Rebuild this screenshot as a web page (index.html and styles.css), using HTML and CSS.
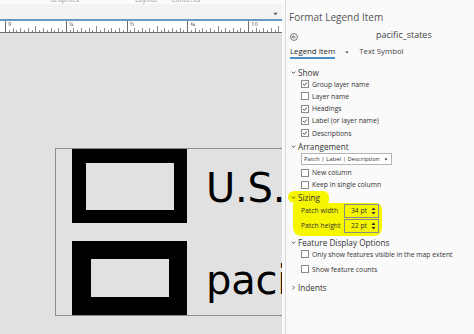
FILE: index.html
```html
<!DOCTYPE html>
<html>
<head>
  <title>Format Legend Item</title>
  <link rel="stylesheet" href="styles.css">
</head>
<body>
  <div class="app">
    <div class="layout-view">
      <div class="toolbar">
        <div class="toolbar-tabs">
          <span class="tb-graphics">Graphics</span>
          <span class="tb-layout">Layout</span>
          <span class="tb-contents">Contents</span>
        </div>
        <div class="toolbar-row">
          <svg class="toolbar-caret" viewBox="0 0 6 4"><path d="M0.5 0.5 3 3.5 5.5 0.5Z"/></svg>
        </div>
      </div>

      <div class="ruler">
        <div class="ruler-scale">
          <span class="ruler-seg">9</span>
          <span class="ruler-seg">¼</span>
          <span class="ruler-seg">½</span>
          <span class="ruler-seg">¾</span>
          <span class="ruler-seg">10</span>
        </div>
      </div>

      <div class="page">
        <div class="legend-frame">
          <div class="legend-row">
            <div class="patch patch-thin"></div>
            <span class="legend-label">U.S. States</span>
          </div>
          <div class="legend-row">
            <div class="patch patch-heavy"></div>
            <span class="legend-label">pacific_states</span>
          </div>
        </div>
      </div>
    </div>

    <aside class="pane">
      <div class="pane-title">Format Legend Item</div>

      <div class="pane-object">
        <svg class="back-icon" viewBox="0 0 10 10">
          <circle cx="5" cy="5" r="4.3"/>
          <path d="M7.2 5H2.9M4.8 3 2.8 5 4.8 7"/>
        </svg>
        <span class="object-name">pacific_states</span>
      </div>

      <div class="tabs">
        <span class="tab tab-active">Legend Item</span>
        <svg class="tab-caret" viewBox="0 0 6 4"><path d="M0.5 0.5 3 3.5 5.5 0.5Z"/></svg>
        <span class="tab">Text Symbol</span>
      </div>

      <section class="group">
        <div class="group-head">
          <svg class="chevron" viewBox="0 0 6 6"><path d="M1 2 3 4 5 2"/></svg>Show
        </div>
        <div class="check"><span class="box"><svg viewBox="0 0 8 8"><path d="M1.6 4.1 3.2 5.9 6.5 1.9"/></svg></span>Group layer name</div>
        <div class="check"><span class="box"></span>Layer name</div>
        <div class="check"><span class="box"><svg viewBox="0 0 8 8"><path d="M1.6 4.1 3.2 5.9 6.5 1.9"/></svg></span>Headings</div>
        <div class="check"><span class="box"><svg viewBox="0 0 8 8"><path d="M1.6 4.1 3.2 5.9 6.5 1.9"/></svg></span>Label (or layer name)</div>
        <div class="check"><span class="box"><svg viewBox="0 0 8 8"><path d="M1.6 4.1 3.2 5.9 6.5 1.9"/></svg></span>Descriptions</div>
      </section>

      <section class="group">
        <div class="group-head group-head-tight">
          <svg class="chevron" viewBox="0 0 6 6"><path d="M1 2 3 4 5 2"/></svg>Arrangement
        </div>
        <div class="select">
          <span>Patch | Label | Description</span>
          <svg class="select-caret" viewBox="0 0 6 4"><path d="M0.5 0.5 3 3.5 5.5 0.5Z"/></svg>
        </div>
        <div class="check check-first"><span class="box"></span>New column</div>
        <div class="check"><span class="box"></span>Keep in single column</div>
      </section>

      <section class="group">
        <div class="group-head group-head-flat">
          <span class="marker marker-head">
            <svg class="chevron" viewBox="0 0 6 6"><path d="M1 2 3 4 5 2"/></svg>Sizing
          </span>
        </div>
        <div class="marker size-fields">
          <div class="size-row">
            <span class="size-label">Patch width</span>
            <span class="spin">
              <span class="spin-value">34 pt</span>
              <svg class="spin-arrows" viewBox="0 0 5 10"><path d="M0.5 4 2.5 1.5 4.5 4ZM0.5 6 2.5 8.5 4.5 6Z"/></svg>
            </span>
          </div>
          <div class="size-row">
            <span class="size-label">Patch height</span>
            <span class="spin">
              <span class="spin-value">22 pt</span>
              <svg class="spin-arrows" viewBox="0 0 5 10"><path d="M0.5 4 2.5 1.5 4.5 4ZM0.5 6 2.5 8.5 4.5 6Z"/></svg>
            </span>
          </div>
        </div>
      </section>

      <section class="group">
        <div class="group-head group-head-flat">
          <svg class="chevron" viewBox="0 0 6 6"><path d="M1 2 3 4 5 2"/></svg>Feature Display Options
        </div>
        <div class="check"><span class="box"></span>Only show features visible in the map extent</div>
        <div class="check check-spaced"><span class="box"></span>Show feature counts</div>
      </section>

      <section class="group">
        <div class="group-head group-head-last">
          <svg class="chevron" viewBox="0 0 6 6"><path d="M2 1 4 3 2 5"/></svg>Indents
        </div>
      </section>
    </aside>
  </div>
</body>
</html>
```

FILE: styles.css
```css
body {
  margin: 0;
  width: 474px;
  height: 334px;
  overflow: hidden;
  background: #fafafa;
  font-family: "Open Sans", sans-serif;
  color: #2b2b2b;
}

.app {
  display: flex;
  height: 334px;
}

/* layout view */

.layout-view {
  width: 282px;
  flex: none;
  display: flex;
  flex-direction: column;
  overflow: hidden;
}

.toolbar {
  height: 19px;
  background: #f3f3f3;
  display: flex;
  flex-direction: column;
}

.toolbar-tabs {
  height: 4px;
  overflow: hidden;
  display: flex;
  font-size: 7px;
  line-height: 8px;
  color: #a0a0a0;
  background: #fbfbfb;
}

.toolbar-tabs span {
  margin-top: -4px;
}

.tb-graphics { margin-left: 50px; }
.tb-layout { margin-left: 56px; }
.tb-contents { margin-left: 14px; }

.toolbar-row {
  flex: 1;
  display: flex;
  justify-content: flex-end;
  align-items: center;
  padding-right: 4px;
}

.toolbar-caret {
  width: 5px;
  height: 4px;
  margin-top: 4px;
  fill: #555;
}

.ruler {
  height: 11px;
  border-top: 2px solid #6a98bf;
  border-bottom: 1px solid #6d6d6d;
  background: #fff;
  padding-left: 5px;
}

.ruler-scale {
  display: flex;
  height: 11px;
  background-image:
    repeating-linear-gradient(to right, #8a8a8a 0 1px, transparent 1px 3.797px),
    repeating-linear-gradient(to right, #8a8a8a 0 1px, transparent 1px 7.594px),
    repeating-linear-gradient(to right, #8a8a8a 0 1px, transparent 1px 30.375px);
  background-size: 100% 2px, 100% 4px, 100% 6px;
  background-position: left bottom;
  background-repeat: no-repeat;
}

.ruler-seg {
  width: 60.75px;
  flex: none;
  box-sizing: border-box;
  border-left: 1px solid #6d6d6d;
  padding-left: 2px;
  font-size: 6px;
  line-height: 7px;
  color: #555;
}

.page {
  flex: 1;
  background: #e1e1e1;
  padding: 115px 0 0 55px;
}

.legend-frame {
  width: 420px;
  border: 1px solid #8c8c8c;
  border-right: 0;
  padding-left: 16px;
  display: flex;
  flex-direction: column;
  gap: 18px;
}

.legend-row {
  display: flex;
  height: 74px;
}

.patch {
  width: 115px;
  height: 74px;
  flex: none;
  box-sizing: border-box;
  border: 0 solid #000;
  background: #e1e1e1;
}

.patch-thin {
  border-width: 14px 13px 13px 14px;
}

.patch-heavy {
  border-width: 18px 18px 18px 19px;
}

.legend-label {
  margin: 4px 0 0 19px;
  font-family: "DejaVu Sans", sans-serif;
  font-size: 40px;
  line-height: 70px;
  letter-spacing: -0.2px;
  white-space: nowrap;
  color: #000;
}

/* format pane */

.pane {
  flex: 1;
  margin-left: 3px;
  border-left: 1px solid #d8d8d8;
  padding-left: 3px;
  background: #fafafa;
  overflow: hidden;
}

.pane-title {
  padding-top: 9px;
  font-size: 10px;
  line-height: 16px;
  color: #555;
}

.pane-object {
  height: 19px;
  display: flex;
  align-items: center;
}

.back-icon {
  width: 8px;
  height: 8px;
  margin: 4px 0 0 1px;
  fill: none;
  stroke: #555;
  stroke-width: 1;
}

.object-name {
  margin-left: 78px;
  font-size: 9px;
  color: #444;
}

.tabs {
  margin-top: 2px;
  display: flex;
  align-items: flex-start;
  font-size: 7.8px;
  line-height: 11px;
}

.tab {
  color: #444;
}

.tab-active {
  margin-left: 1px;
  border-bottom: 2px solid #4a8ec8;
  color: #222;
}

.tab-caret {
  width: 4px;
  height: 3px;
  margin: 5px 10px 0 10px;
  fill: #444;
}

.group-head {
  margin-top: 7px;
  height: 12px;
  display: flex;
  align-items: center;
  font-size: 8.2px;
  color: #333;
}

.group-head-tight {
  margin-top: 1px;
}

.group-head-flat {
  margin-top: 0;
}

.group-head-last {
  margin-top: 6px;
}

.chevron {
  width: 5px;
  height: 5px;
  margin: 0 2px 0 2px;
  fill: none;
  stroke: #444;
  stroke-width: 1.1;
}

.check {
  height: 12.25px;
  display: flex;
  align-items: center;
  padding-left: 12px;
  font-size: 6.8px;
  color: #333;
  white-space: nowrap;
}

.check-first {
  margin-top: 1.25px;
}

.check-spaced {
  margin-top: 3px;
}

.box {
  width: 8px;
  height: 8px;
  flex: none;
  box-sizing: border-box;
  border: 1px solid #8a8a8a;
  background: #fff;
  margin-right: 3px;
  display: flex;
}

.box svg {
  width: 6px;
  height: 6px;
  fill: none;
  stroke: #333;
  stroke-width: 1.2;
}

.select {
  margin: 1px 0 0 12px;
  width: 91px;
  height: 12px;
  box-sizing: border-box;
  border: 1px solid #b3b3b3;
  background: #fff;
  display: flex;
  align-items: center;
  padding: 0 3px 0 2px;
  font-size: 6px;
  color: #333;
  white-space: nowrap;
}

.select-caret {
  width: 4px;
  height: 3px;
  margin-left: auto;
  fill: #444;
}

.marker {
  background: #f6f600;
}

.marker-head {
  display: flex;
  align-items: center;
  width: 40px;
  height: 12px;
  margin-left: -1px;
  padding-left: 1px;
  border-radius: 6px 6px 3px 6px;
}

.size-fields {
  margin-left: 4px;
  width: 89px;
  padding-bottom: 3px;
  border-radius: 2px 6px 8px 8px;
}

.size-row {
  height: 15px;
  display: flex;
  align-items: center;
  padding-left: 8px;
  font-size: 6.8px;
  color: #333;
}

.size-label {
  width: 43px;
  white-space: nowrap;
}

.spin {
  width: 35px;
  height: 14px;
  box-sizing: border-box;
  border: 1px solid #8a8a8a;
  display: flex;
  align-items: center;
  justify-content: flex-end;
  padding-right: 2px;
}

.spin-value {
  margin-right: 4px;
}

.spin-arrows {
  width: 5px;
  height: 10px;
  fill: #333;
}
```
